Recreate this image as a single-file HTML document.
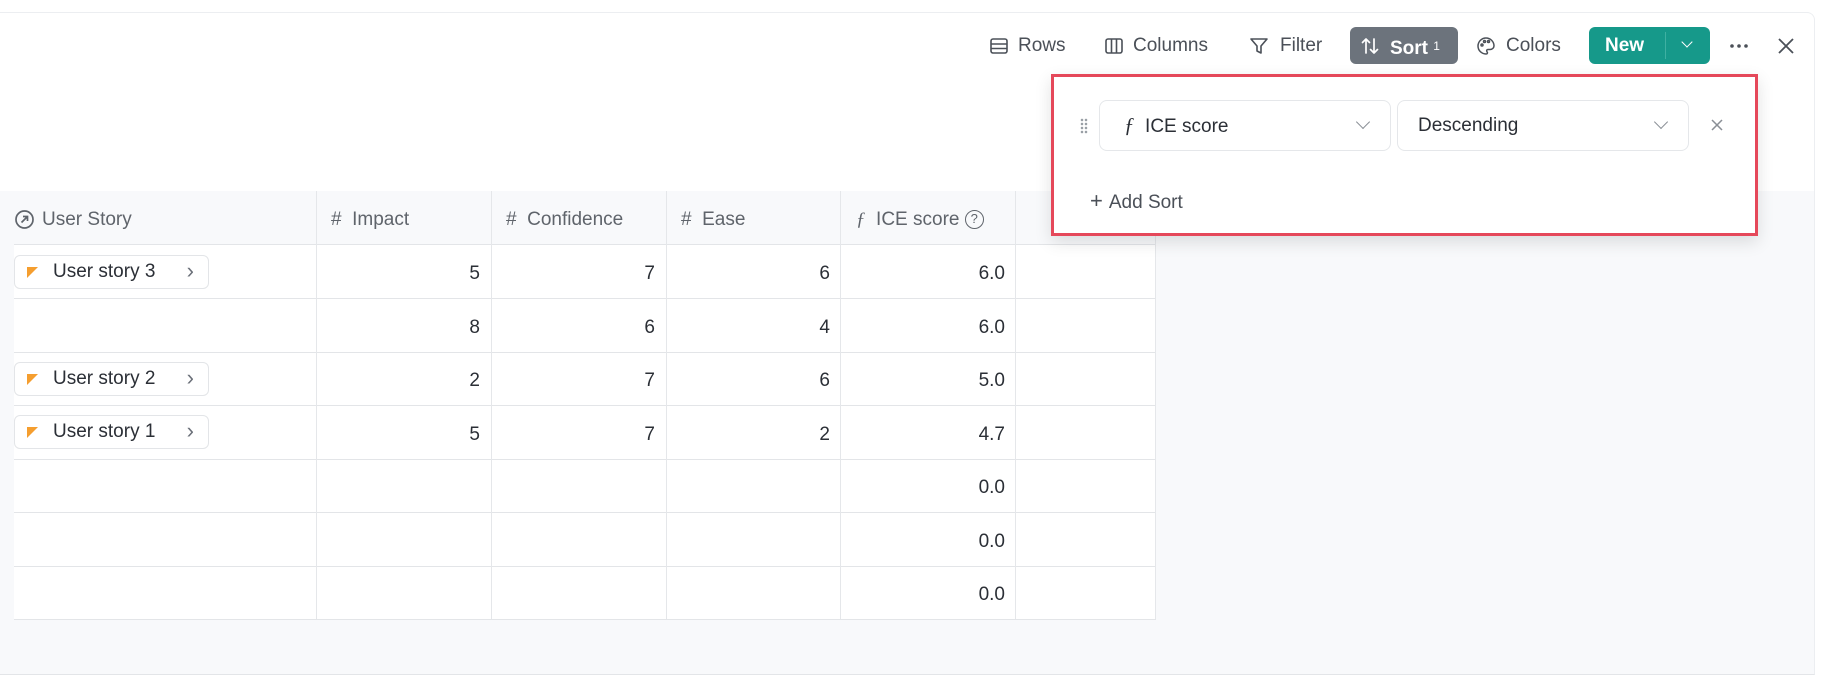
<!DOCTYPE html>
<html><head><style>
*{box-sizing:border-box;margin:0;padding:0}
body{width:1838px;height:688px;background:#fff;font-family:"Liberation Sans",Arial,sans-serif;position:relative;overflow:hidden;color:#2b2f36}
.abs{position:absolute}
.panel{left:0;top:12px;width:1815px;height:663px;border-top:1px solid #eceef1;border-right:1px solid #eceef1;border-bottom:1px solid #e3e5e8;border-top-right-radius:8px}
.grey{left:0;top:191px;width:1814px;height:483px;background:#f8f9fb}
.tb{font-size:19px;color:#4b5058;top:34px;line-height:24px}
.table{left:14px;top:191px;width:1142px}
.hdr{position:absolute;top:0;height:54px;width:1142px;border-bottom:1px solid #e3e5e8;background:#f8f9fb}
.body{position:absolute;left:0;top:54px;width:1142px;height:374px;background:#fff}
.hl{position:absolute;left:0;width:1142px;height:1px;background:#e3e5e8}
.vl{position:absolute;top:0;width:1px;height:428px;background:#e5e7ea}
.h{position:absolute;top:18px;font-size:19px;color:#5f646b;white-space:nowrap}
.chip{position:absolute;left:0;width:195px;height:34px;border:1px solid #e3e5e8;border-radius:6px;background:#fff;font-size:19px;line-height:32px;padding-left:38px;color:#2b2f36}
.chip:before{content:"";position:absolute;left:12px;top:11px;width:11px;height:11px;background:#f59e2f;clip-path:polygon(0 0,100% 0,0 100%)}
.chip:after{content:"›";position:absolute;right:14px;top:-1px;color:#6b7079;font-size:22px}
.pop{left:1051px;top:74px;width:707px;height:162px;border:3px solid #e5485a;background:#fff;box-shadow:0 6px 16px rgba(0,0,0,.12)}
.sel{position:absolute;top:23px;height:51px;border:1px solid #e5e7ea;border-radius:8px;font-size:19px;line-height:49px;color:#2b2f36}
.chev{position:absolute;right:22px;top:16px;width:10px;height:10px;border-right:1.5px solid #8a8f96;border-bottom:1.5px solid #8a8f96;transform:rotate(45deg)}
.v{position:absolute;font-size:19px;width:60px;text-align:right;color:#2b2f36}
</style></head><body>
<div class="abs panel"></div>
<div class="abs grey"></div>

<!-- toolbar -->
<svg class="abs" style="left:989px;top:36px" width="20" height="20" viewBox="0 0 20 20" fill="none" stroke="#4b5058" stroke-width="1.6"><rect x="2" y="3" width="16" height="14" rx="2"/><path d="M2 8h16M2 12.5h16"/></svg>
<div class="abs tb" style="left:1018px">Rows</div>
<svg class="abs" style="left:1104px;top:36px" width="20" height="20" viewBox="0 0 20 20" fill="none" stroke="#4b5058" stroke-width="1.6"><rect x="2" y="3" width="16" height="14" rx="2"/><path d="M7.5 3v14M12.5 3v14"/></svg>
<div class="abs tb" style="left:1133px">Columns</div>
<svg class="abs" style="left:1249px;top:36px" width="20" height="20" viewBox="0 0 20 20" fill="none" stroke="#4b5058" stroke-width="1.6" stroke-linejoin="round"><path d="M2 3h16l-6 7v7l-4-2v-5z"/></svg>
<div class="abs tb" style="left:1280px">Filter</div>
<div class="abs" style="left:1350px;top:27px;width:108px;height:37px;background:#6c737c;border-radius:6px"></div>
<svg class="abs" style="left:1360px;top:36px" width="20" height="20" viewBox="0 0 20 20" fill="none" stroke="#fff" stroke-width="1.7" stroke-linecap="round" stroke-linejoin="round"><path d="M6 17V3M2.5 6.5L6 3l3.5 3.5M14 3v14M10.5 13.5L14 17l3.5-3.5"/></svg>
<div class="abs tb" style="left:1390px;color:#fff;font-weight:bold">Sort <span style="font-size:12px;font-weight:normal;vertical-align:4px">1</span></div>
<svg class="abs" style="left:1476px;top:36px" width="20" height="20" viewBox="0 0 20 20" fill="none" stroke="#4b5058" stroke-width="1.5"><path d="M10 2a8 8 0 1 0 0 16c1.5 0 1.8-1.3 1-2.2-.8-1-.3-2.3 1-2.3h2.2A3.8 3.8 0 0 0 18 9.7 8 8 0 0 0 10 2z"/><circle cx="6" cy="9" r="1"/><circle cx="8.5" cy="5.5" r="1"/><circle cx="12.5" cy="5.5" r="1"/></svg>
<div class="abs tb" style="left:1506px">Colors</div>
<div class="abs" style="left:1589px;top:27px;width:121px;height:37px;background:#16998a;border-radius:6px"></div>
<div class="abs tb" style="left:1605px;color:#fff;font-weight:bold">New</div>
<div class="abs" style="left:1665px;top:32px;width:1px;height:27px;background:#3fb0a2"></div>
<div class="abs" style="left:1683px;top:38px;width:8px;height:8px;border-right:1.8px solid #fff;border-bottom:1.8px solid #fff;transform:rotate(45deg)"></div>
<svg class="abs" style="left:1729px;top:43px" width="20" height="6" viewBox="0 0 20 6" fill="#4b5058"><circle cx="3" cy="3" r="1.8"/><circle cx="10" cy="3" r="1.8"/><circle cx="17" cy="3" r="1.8"/></svg>
<svg class="abs" style="left:1777px;top:37px" width="18" height="18" viewBox="0 0 18 18" stroke="#4b5058" stroke-width="1.8"><path d="M2 2l14 14M16 2L2 16"/></svg>

<!-- table -->
<div class="abs table">
 <div class="hdr">
  <svg class="abs" style="left:0;top:18px" width="21" height="21" viewBox="0 0 21 21" fill="none" stroke="#5f646b" stroke-width="1.7"><circle cx="10.5" cy="10.5" r="8.5"/><path d="M7.5 13.5l6-6M9 7.5h4.5V12"/></svg>
  <div class="h" style="left:28px">User Story</div>
  <div class="h" style="left:317px">#&nbsp; Impact</div>
  <div class="h" style="left:492px">#&nbsp; Confidence</div>
  <div class="h" style="left:667px">#&nbsp; Ease</div>
  <div class="h" style="left:842px"><i style="font-family:'Liberation Serif',serif">ƒ</i>&nbsp; ICE score <span style="display:inline-block;width:19px;height:19px;border:1.6px solid #5f646b;border-radius:50%;font-size:13px;text-align:center;line-height:16px;vertical-align:2px">?</span></div>
 </div>
 <div class="body"></div>
 <div class="hl" style="top:107px"></div>
 <div class="hl" style="top:161px"></div>
 <div class="hl" style="top:214px"></div>
 <div class="hl" style="top:268px"></div>
 <div class="hl" style="top:321px"></div>
 <div class="hl" style="top:375px"></div>
 <div class="hl" style="top:428px"></div>
 <div class="chip" style="top:64px">User story 3</div>
 <div class="chip" style="top:171px">User story 2</div>
 <div class="chip" style="top:224px">User story 1</div>
 <div class="vl" style="left:302px"></div><div class="vl" style="left:477px"></div><div class="vl" style="left:652px"></div><div class="vl" style="left:826px"></div><div class="vl" style="left:1001px"></div><div class="vl" style="left:1141px"></div>
</div>

<div class="v" style="left:420px;top:263px">5</div><div class="v" style="left:595px;top:263px">7</div><div class="v" style="left:770px;top:263px">6</div><div class="v" style="left:945px;top:263px">6.0</div>
<div class="v" style="left:420px;top:317px">8</div><div class="v" style="left:595px;top:317px">6</div><div class="v" style="left:770px;top:317px">4</div><div class="v" style="left:945px;top:317px">6.0</div>
<div class="v" style="left:420px;top:370px">2</div><div class="v" style="left:595px;top:370px">7</div><div class="v" style="left:770px;top:370px">6</div><div class="v" style="left:945px;top:370px">5.0</div>
<div class="v" style="left:420px;top:424px">5</div><div class="v" style="left:595px;top:424px">7</div><div class="v" style="left:770px;top:424px">2</div><div class="v" style="left:945px;top:424px">4.7</div>
<div class="v" style="left:945px;top:477px">0.0</div>
<div class="v" style="left:945px;top:531px">0.0</div>
<div class="v" style="left:945px;top:584px">0.0</div>

<!-- popup -->
<div class="abs pop">
 <div class="abs" style="left:26px;top:41px;width:8px;height:16px;background-image:radial-gradient(circle,#9aa0a6 1.2px,transparent 1.4px);background-size:4px 4px"></div>
 <div class="sel" style="left:45px;width:292px;padding-left:24px"><i style="font-family:'Liberation Serif',serif;font-size:21px">ƒ</i>&nbsp; ICE score<div class="chev"></div></div>
 <div class="sel" style="left:343px;width:292px;padding-left:20px">Descending<div class="chev"></div></div>
 <svg class="abs" style="left:656px;top:41px" width="14" height="14" viewBox="0 0 14 14" stroke="#8a8f96" stroke-width="1.5"><path d="M2 2l10 10M12 2L2 12"/></svg>
 <div class="abs" style="left:36px;top:111px;font-size:19px;color:#4b5058"><span style="font-size:22px;margin-right:6px">+</span>Add Sort</div>
</div>
</body></html>
